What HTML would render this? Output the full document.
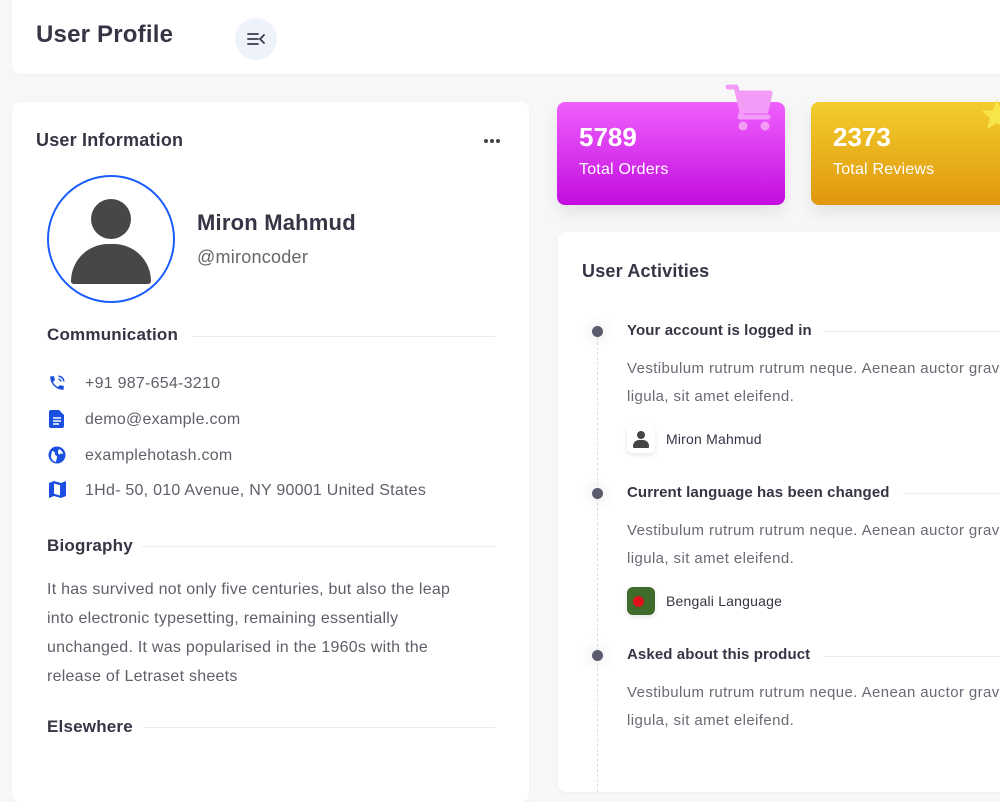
<!DOCTYPE html>
<html><head><meta charset="utf-8"><style>
*{margin:0;padding:0;box-sizing:border-box}
html,body{width:1000px;height:750px;overflow:hidden;background:#f7f7f8;font-family:"Liberation Sans",sans-serif;color:#353545}
.a{position:absolute;white-space:nowrap}
.card{position:absolute;background:#fff;border-radius:8px;box-shadow:0 1px 3px rgba(0,0,0,.03)}
.h{font-weight:bold;color:#353545}
.line{position:absolute;height:1px;background:#ececf0}
.g{color:#5f5f6a;letter-spacing:0.25px}
</style></head><body>
<div class="card" style="left:12px;top:-10px;width:1010px;height:84px"></div>
<div class="a h" style="left:36px;top:21px;font-size:24px;letter-spacing:0.2px">User Profile</div>
<div class="a" style="left:235px;top:18px;width:42px;height:42px;border-radius:50%;background:#eef2fb"></div>
<svg class="a" style="left:246px;top:31px" width="20" height="16" viewBox="0 0 20 16"><g stroke="#3a3a48" stroke-width="1.8" fill="none" stroke-linecap="round"><path d="M2 3h10M2 8h10M2 13h10M18 4l-4 4 4 4"/></g></svg>

<div class="card" style="left:12px;top:102px;width:517px;height:700px"></div>
<div class="a h" style="left:36px;top:130px;font-size:18px;letter-spacing:0.2px">User Information</div>
<div class="a" style="left:484px;top:139px;width:4px;height:4px;border-radius:50%;background:#444;box-shadow:6px 0 #444,12px 0 #444"></div>
<div class="a" style="left:47px;top:175px;width:128px;height:128px;border-radius:50%;border:2px solid #1a5cff;background:#fff">
 <div class="a" style="left:42px;top:22px;width:40px;height:40px;border-radius:50%;background:#474747"></div>
 <div class="a" style="left:22px;top:67px;width:80px;height:40px;border-radius:40px 40px 3px 3px;background:#474747"></div>
</div>
<div class="a h" style="left:197px;top:210px;font-size:22px;font-weight:600;letter-spacing:0.2px">Miron Mahmud</div>
<div class="a g" style="left:197px;top:247px;font-size:18px;color:#666">@mironcoder</div>

<div class="a h" style="left:47px;top:325px;font-size:17px;letter-spacing:0.2px">Communication</div>
<div class="line" style="left:192px;top:336px;width:303px"></div>
<svg class="a" style="left:48px;top:374px" width="18" height="18" viewBox="0 0 24 24"><path fill="#1a4fe0" d="M6.6 10.8c1.4 2.8 3.8 5.1 6.6 6.6l2.2-2.2c.3-.3.7-.4 1-.2 1.1.4 2.3.6 3.6.6.6 0 1 .4 1 1V20c0 .6-.4 1-1 1C10.6 21 3 13.4 3 4c0-.6.4-1 1-1h3.5c.6 0 1 .4 1 1 0 1.3.2 2.5.6 3.6.1.3 0 .7-.2 1z"/><path d="M14 3a7 7 0 0 1 7 7M14 7a3 3 0 0 1 3 3" stroke="#1a4fe0" stroke-width="2" fill="none"/></svg>
<div class="a g" style="left:85px;top:375px;font-size:16px">+91 987-654-3210</div>
<svg class="a" style="left:49px;top:410px" width="16" height="18" viewBox="0 0 16 18"><path fill="#1a4fe0" d="M2 0h8l5 5v11a2 2 0 0 1-2 2H2a2 2 0 0 1-2-2V2a2 2 0 0 1 2-2z"/><path d="M4 8h8M4 11h8M4 14h6" stroke="#fff" stroke-width="1.6"/></svg>
<div class="a g" style="left:85px;top:411px;font-size:16px">demo@example.com</div>
<svg class="a" style="left:48px;top:446px" width="18" height="18" viewBox="0 0 18 18"><circle cx="9" cy="9" r="8.5" fill="#1a4fe0"/><path fill="#fff" d="M4 5c2 0 3 1 3 3s2 1 2 3-1 3-1 5c-3-1-5-3-5-6zM11 3c2 1 4 3 4 5-1 0-2-1-3 0s-2 0-2-2 1-2 1-3z"/></svg>
<div class="a g" style="left:85px;top:447px;font-size:16px">examplehotash.com</div>
<svg class="a" style="left:49px;top:481px" width="17" height="17" viewBox="0 0 17 17"><path fill="#1a4fe0" d="M0 2l5-2 7 2 5-2v15l-5 2-7-2-5 2z"/><path fill="#fff" d="M5 2.5l6 1.8v10.2l-6-1.8z"/></svg>
<div class="a g" style="left:85px;top:482px;font-size:16px">1Hd- 50, 010 Avenue, NY 90001 United States</div>

<div class="a h" style="left:47px;top:536px;font-size:17px;letter-spacing:0.2px">Biography</div>
<div class="line" style="left:142px;top:546px;width:353px"></div>
<div class="a g" style="left:47px;top:575px;font-size:16px;line-height:29px">It has survived not only five centuries, but also the leap<br>into electronic typesetting, remaining essentially<br>unchanged. It was popularised in the 1960s with the<br>release of Letraset sheets</div>
<div class="a h" style="left:47px;top:717px;font-size:17px;letter-spacing:0.2px">Elsewhere</div>
<div class="line" style="left:143px;top:727px;width:352px"></div>

<div class="a" style="left:557px;top:102px;width:228px;height:103px;border-radius:8px;background:linear-gradient(#ef60fd,#c30ddf);box-shadow:0 8px 16px rgba(0,0,0,.08)"></div>
<svg class="a" style="left:724px;top:82px" width="52" height="52" viewBox="0 0 52 52"><g fill="none" stroke="#f39cf7" stroke-width="5" stroke-linejoin="round" stroke-linecap="round"><path d="M4 5h8l6 24h24l4-18H16"/><path d="M18 29l-2 6h28"/></g><path d="M15 11h31l-4 18H19z" fill="#f39cf7"/><circle cx="19" cy="44" r="4.5" fill="#f39cf7"/><circle cx="41" cy="44" r="4.5" fill="#f39cf7"/></svg>
<div class="a" style="left:579px;top:122px;font-size:26px;font-weight:bold;color:#fff">5789</div>
<div class="a" style="left:579px;top:161px;font-size:16px;color:#fff;letter-spacing:0.2px">Total Orders</div>

<div class="a" style="left:811px;top:102px;width:220px;height:103px;border-radius:8px;background:linear-gradient(#f3cd2d,#e0970d);box-shadow:0 8px 16px rgba(0,0,0,.08)"></div>
<svg class="a" style="left:982px;top:100px" width="30" height="34" viewBox="0 0 30 34"><path fill="#f7e54a" d="M15 0l4 10 11 1-8 7 3 11-10-6-10 6 3-11-8-7 11-1z"/></svg>
<div class="a" style="left:833px;top:122px;font-size:26px;font-weight:bold;color:#fff">2373</div>
<div class="a" style="left:833px;top:161px;font-size:16px;color:#fff;letter-spacing:0.2px">Total Reviews</div>

<div class="card" style="left:558px;top:232px;width:470px;height:560px;overflow:hidden">
 <div class="a h" style="left:24px;top:29px;font-size:18px;letter-spacing:0.2px">User Activities</div>
 <div class="a" style="left:39px;top:100px;height:480px;border-left:1.5px dashed #ddd"></div>

 <div class="a" style="left:34px;top:94px;width:11px;height:11px;border-radius:50%;background:#5b5b6e;box-shadow:0 0 10px 6px rgba(0,0,0,.04)"></div>
 <div class="a h" style="left:69px;top:90px;font-size:15px;letter-spacing:0.1px">Your account is logged in</div>
 <div class="line" style="left:265px;top:99px;width:300px"></div>
 <div class="a g" style="left:69px;top:123px;font-size:15px;line-height:28px;color:#6a6a75;letter-spacing:0.4px">Vestibulum rutrum rutrum neque. Aenean auctor gravida sem<br>ligula, sit amet eleifend.</div>
 <div class="a" style="left:69px;top:193px;width:28px;height:28px;border-radius:6px;background:#fff;box-shadow:0 2px 6px rgba(0,0,0,.1)">
  <div class="a" style="left:10px;top:6px;width:8px;height:8px;border-radius:50%;background:#444"></div>
  <div class="a" style="left:6px;top:15px;width:16px;height:8px;border-radius:6px 6px 1px 1px;background:#444"></div>
 </div>
 <div class="a" style="left:108px;top:199px;font-size:14px;color:#353545;letter-spacing:0.2px">Miron Mahmud</div>

 <div class="a" style="left:34px;top:256px;width:11px;height:11px;border-radius:50%;background:#5b5b6e;box-shadow:0 0 10px 6px rgba(0,0,0,.04)"></div>
 <div class="a h" style="left:69px;top:252px;font-size:15px;letter-spacing:0.1px">Current language has been changed</div>
 <div class="line" style="left:345px;top:261px;width:200px"></div>
 <div class="a g" style="left:69px;top:285px;font-size:15px;line-height:28px;color:#6a6a75;letter-spacing:0.4px">Vestibulum rutrum rutrum neque. Aenean auctor gravida sem<br>ligula, sit amet eleifend.</div>
 <div class="a" style="left:69px;top:355px;width:28px;height:28px;border-radius:6px;background:#3f6b2b;box-shadow:0 2px 6px rgba(0,0,0,.1)">
  <div class="a" style="left:6px;top:9px;width:11px;height:11px;border-radius:50%;background:#e0131d"></div>
 </div>
 <div class="a" style="left:108px;top:361px;font-size:14px;color:#353545;letter-spacing:0.2px">Bengali Language</div>

 <div class="a" style="left:34px;top:418px;width:11px;height:11px;border-radius:50%;background:#5b5b6e;box-shadow:0 0 10px 6px rgba(0,0,0,.04)"></div>
 <div class="a h" style="left:69px;top:414px;font-size:15px;letter-spacing:0.1px">Asked about this product</div>
 <div class="line" style="left:265px;top:424px;width:300px"></div>
 <div class="a g" style="left:69px;top:447px;font-size:15px;line-height:28px;color:#6a6a75;letter-spacing:0.4px">Vestibulum rutrum rutrum neque. Aenean auctor gravida sem<br>ligula, sit amet eleifend.</div>
</div>
</body></html>
